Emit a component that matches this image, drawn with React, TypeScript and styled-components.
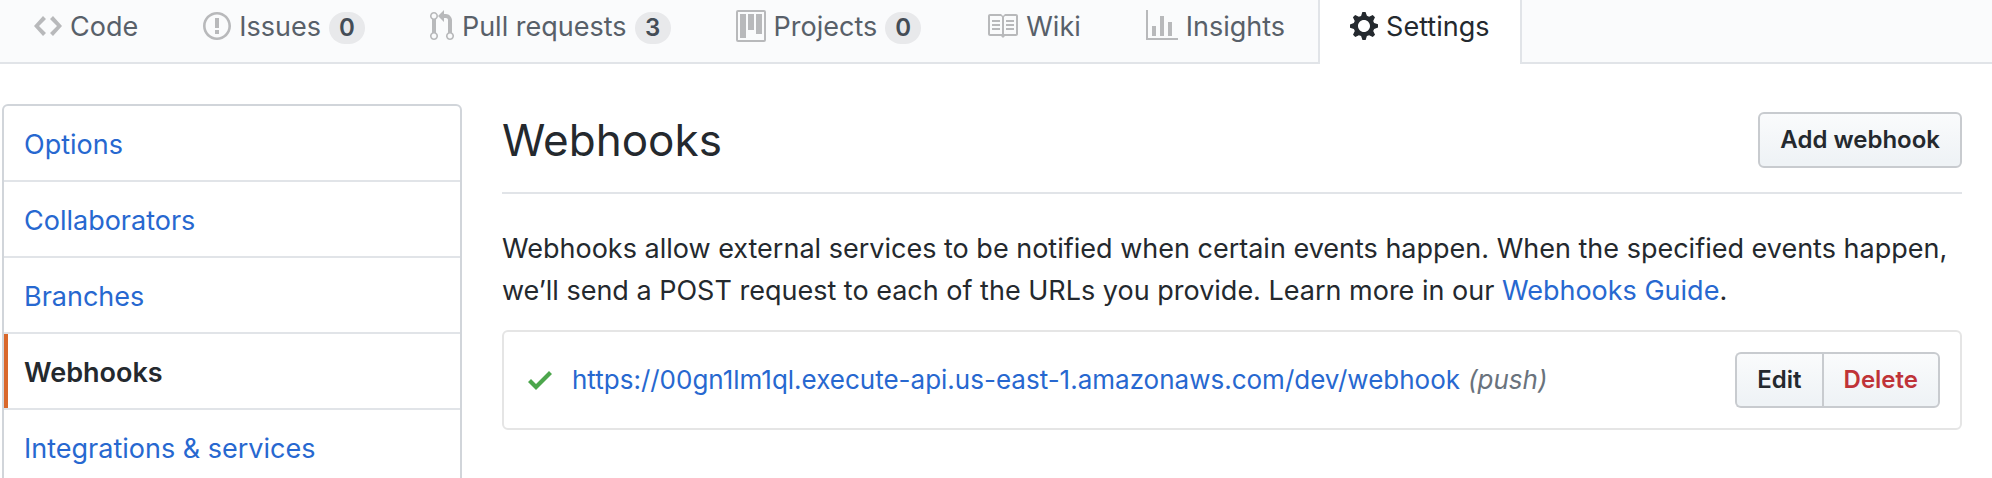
import React from "react";
import styled, { createGlobalStyle, css } from "styled-components";

const GlobalStyle = createGlobalStyle`
  *, *::before, *::after { box-sizing: border-box; }
  body {
    margin: 0;
    background: #fff;
    color: #24292e;
    font-family: Inter, "Liberation Sans", sans-serif;
    font-size: 27px;
    line-height: 42px;
  }
`;

const Page = styled.div`
  height: 100vh;
  overflow: hidden;
`;

const TabBar = styled.nav`
  display: flex;
  height: 64px;
  padding-left: 2px;
  background: #fafbfc;
  border-bottom: 2px solid #e1e4e8;
`;

const Tab = styled.a<{ $active?: boolean }>`
  display: flex;
  align-items: center;
  gap: 8px;
  height: 64px;
  padding: 0 31px 12px 30px;
  border: 2px solid transparent;
  border-width: 0 2px;
  color: #586069;
  white-space: nowrap;
  text-decoration: none;

  svg { color: #b8b9bb; }

  ${(p) =>
    p.$active &&
    css`
      background: #fff;
      border-color: #e1e4e8;
      color: #24292e;
      svg { color: inherit; }
    `}
`;

const TabLabel = styled.span`
  padding-top: 2px;
`;

const Counter = styled.span`
  min-width: 36px;
  margin-top: 4px;
  padding: 0 10px;
  border-radius: 16px;
  background: #e8e9eb;
  color: #444d56;
  font-size: 24px;
  font-weight: 600;
  line-height: 32px;
  text-align: center;
`;

const Glyph = styled.svg`
  display: block;
  flex: none;
  height: 32px;
  fill: currentColor;
`;

const Container = styled.div`
  display: flex;
  align-items: flex-start;
  gap: 40px;
  padding: 40px 30px 40px 2px;
`;

const SideMenu = styled.nav`
  flex: none;
  width: 460px;
  border: 2px solid #d1d5da;
  border-radius: 6px;
  overflow: hidden;
`;

const SideLink = styled.a<{ $active?: boolean }>`
  display: block;
  padding: 18px 20px 14px;
  border-bottom: 2px solid #e1e4e8;
  color: #2768d0;
  text-decoration: none;

  &:last-child { border-bottom: 0; }

  ${(p) =>
    p.$active &&
    css`
      box-shadow: inset 4px 0 0 #d9682b;
      color: #24292e;
      font-weight: 600;
    `}
`;

const Main = styled.main`
  flex: 1;
  min-width: 0;
`;

const Subhead = styled.header`
  display: flex;
  align-items: center;
  justify-content: space-between;
  padding: 8px 0 24px;
  border-bottom: 2px solid #e1e4e8;
`;

const Title = styled.h1`
  margin: 0;
  font-size: 44px;
  font-weight: 400;
  line-height: 56px;
`;

const Button = styled.button<{ $danger?: boolean }>`
  height: 56px;
  padding: 0 20px;
  border: 2px solid #c8cbcf;
  border-radius: 6px;
  background: linear-gradient(#fafbfc, #eff3f6 90%);
  color: ${(p) => (p.$danger ? "#bf3338" : "#24292e")};
  font: 600 24px/40px Inter, "Liberation Sans", sans-serif;
  white-space: nowrap;
`;

const ButtonGroup = styled.div`
  display: flex;
  margin-left: auto;

  ${Button}:first-child { border-right: 0; border-radius: 6px 0 0 6px; }
  ${Button}:last-child { border-radius: 0 6px 6px 0; }
`;

const Intro = styled.p`
  margin: 34px 0 18px;
`;

const Link = styled.a`
  color: #2768d0;
  text-decoration: none;
`;

const HookRow = styled.div`
  display: flex;
  align-items: center;
  height: 100px;
  padding: 0 20px 0 24px;
  border: 2px solid #e5e5e5;
  border-radius: 6px;
  font-size: 26px;

  > svg { margin-right: 20px; color: #4ca64c; }
`;

const Events = styled.em`
  margin-left: 8px;
  color: #6a737d;
`;

const icons = {
  code: [14, "M9.5 3L8 4.5 11.5 8 8 11.5 9.5 13 14 8 9.5 3zm-5 0L0 8l4.5 5L6 11.5 2.5 8 6 4.5 4.5 3z"],
  issue: [14, "M7 2.3c3.14 0 5.7 2.56 5.7 5.7s-2.56 5.7-5.7 5.7A5.71 5.71 0 0 1 1.3 8c0-3.14 2.56-5.7 5.7-5.7zM7 1C3.14 1 0 4.14 0 8s3.14 7 7 7 7-3.14 7-7-3.14-7-7-7zm1 3H6v5h2V4zm0 6H6v2h2v-2z"],
  pull: [12, "M11 11.28V5c-.03-.78-.34-1.47-.94-2.06C9.46 2.35 8.78 2.03 8 2H7V0L4 3l3 3V4h1c.27.02.48.11.69.31.21.2.3.42.31.69v6.28A1.993 1.993 0 0 0 10 15a1.993 1.993 0 0 0 1-3.72zm-1 2.92c-.66 0-1.2-.55-1.2-1.2 0-.65.55-1.2 1.2-1.2.65 0 1.2.55 1.2 1.2 0 .65-.55 1.2-1.2 1.2zM4 3c0-1.11-.89-2-2-2a1.993 1.993 0 0 0-1 3.72v6.56A1.993 1.993 0 0 0 2 15a1.993 1.993 0 0 0 1-3.72V4.72c.59-.34 1-.98 1-1.72zm-.8 10c0 .66-.55 1.2-1.2 1.2-.65 0-1.2-.55-1.2-1.2 0-.65.55-1.2 1.2-1.2.65 0 1.2.55 1.2 1.2zM2 4.2C1.34 4.2.8 3.65.8 3c0-.65.55-1.2 1.2-1.2.65 0 1.2.55 1.2 1.2 0 .65-.55 1.2-1.2 1.2z"],
  project: [15, "M10 12h3V2h-3v10zm-4-2h3V2H6v8zm-4 4h3V2H2v12zm-1 1h13V1H1v14zM14 0H1a1 1 0 0 0-1 1v14a1 1 0 0 0 1 1h13a1 1 0 0 0 1-1V1a1 1 0 0 0-1-1z"],
  book: [16, "M3 5h4v1H3V5zm0 3h4V7H3v1zm0 2h4V9H3v1zm11-5h-4v1h4V5zm0 2h-4v1h4V7zm0 2h-4v1h4V9zm2-6v9c0 .55-.45 1-1 1H9.5l-1 1-1-1H2c-.55 0-1-.45-1-1V3c0-.55.45-1 1-1h5.5l1 1 1-1H15c.55 0 1 .45 1 1zm-8 .5L7.5 3H2v9h6V3.5zm7-.5H9.5l-.5.5V12h6V3z"],
  graph: [16, "M16 14v1H0V0h1v14h15zM5 13H3V8h2v5zm4 0H7V3h2v10zm4 0h-2V6h2v7z"],
  gear: [14, "M14 8.77v-1.6l-1.94-.64-.45-1.09.88-1.84-1.13-1.13-1.81.91-1.09-.45-.69-1.92h-1.6l-.63 1.94-1.11.45-1.84-.88-1.13 1.13.91 1.81-.45 1.09L0 7.23v1.59l1.94.64.45 1.09-.88 1.84 1.13 1.13 1.81-.91 1.09.45.69 1.92h1.59l.63-1.94 1.11-.45 1.84.88 1.13-1.13-.92-1.81.47-1.09L14 8.75v.02zM7 11c-1.66 0-3-1.34-3-3s1.34-3 3-3 3 1.34 3 3-1.34 3-3 3z"],
  check: [12, "M12 5l-8 8-4-4 1.5-1.5L4 10l6.5-6.5L12 5z"],
} as const;

type IconName = keyof typeof icons;

function Icon({ name }: { name: IconName }) {
  const [width, path] = icons[name];
  return (
    <Glyph viewBox={`0 0 ${width} 16`} width={width * 2} aria-hidden="true">
      <path fillRule="evenodd" d={path} />
    </Glyph>
  );
}

const tabs: { label: string; icon: IconName; count?: number }[] = [
  { label: "Code", icon: "code" },
  { label: "Issues", icon: "issue", count: 0 },
  { label: "Pull requests", icon: "pull", count: 3 },
  { label: "Projects", icon: "project", count: 0 },
  { label: "Wiki", icon: "book" },
  { label: "Insights", icon: "graph" },
  { label: "Settings", icon: "gear" },
];

const sections = ["Options", "Collaborators", "Branches", "Webhooks", "Integrations & services"];

export default function App() {
  return (
    <Page>
      <GlobalStyle />
      <TabBar aria-label="Repository">
        {tabs.map((t) => (
          <Tab key={t.label} href="#" $active={t.label === "Settings"}>
            <Icon name={t.icon} />
            <TabLabel>{t.label}</TabLabel>
            {t.count !== undefined && <Counter>{t.count}</Counter>}
          </Tab>
        ))}
      </TabBar>
      <Container>
        <SideMenu aria-label="Settings">
          {sections.map((s) => (
            <SideLink key={s} href="#" $active={s === "Webhooks"}>
              {s}
            </SideLink>
          ))}
        </SideMenu>
        <Main>
          <Subhead>
            <Title>Webhooks</Title>
            <Button type="button">Add webhook</Button>
          </Subhead>
          <Intro>
            Webhooks allow external services to be notified when certain events happen. When the
            specified events happen, we’ll send a POST request to each of the URLs you provide.
            Learn more in our <Link href="#">Webhooks Guide</Link>.
          </Intro>
          <HookRow>
            <Icon name="check" />
            <Link href="#">https://00gn1lm1ql.execute-api.us-east-1.amazonaws.com/dev/webhook</Link>
            <Events>(push)</Events>
            <ButtonGroup>
              <Button type="button">Edit</Button>
              <Button type="button" $danger>
                Delete
              </Button>
            </ButtonGroup>
          </HookRow>
        </Main>
      </Container>
    </Page>
  );
}
